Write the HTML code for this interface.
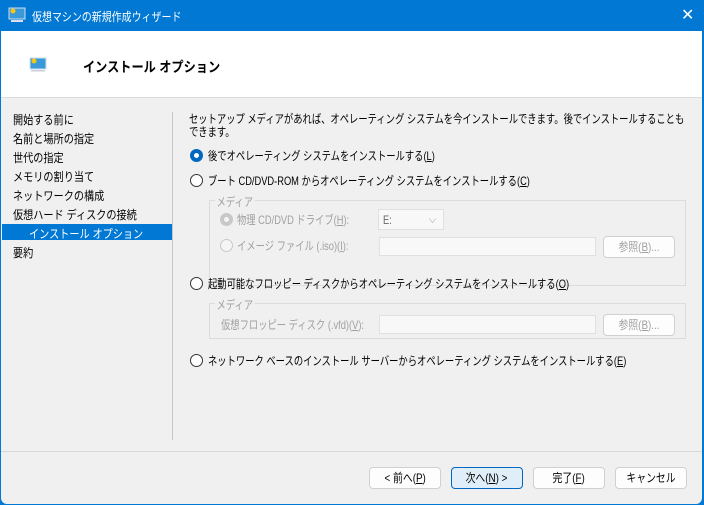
<!DOCTYPE html>
<html><head><meta charset="utf-8"><style>
*{margin:0;padding:0;box-sizing:border-box}
body{width:704px;height:505px;background:#0078d4;font-family:"Liberation Sans","Noto Sans CJK JP",sans-serif;font-size:12px;color:#000;position:relative;overflow:hidden}
.win{position:absolute;left:1px;top:31px;width:701px;height:473px;background:#f0f0f0;border-bottom-left-radius:6px;border-bottom-right-radius:6px;overflow:hidden}
.t{position:absolute;white-space:nowrap;transform:scaleX(0.775);transform-origin:0 0}
.t.title{left:32px;top:8px;color:#fff;font-size:12px;transform:scaleX(0.83)}
.hdr{position:absolute;left:0;top:0;width:701px;height:67px;background:#fff;border-bottom:1px solid #dcdcdc}
.t.nav{left:12px;font-size:12px;transform:scaleX(0.845)}
.sel{position:absolute;left:1px;top:193px;width:170px;height:16px;background:#0078d4}
.rad{position:absolute;width:13px;height:13px;border-radius:50%;border:1px solid #333;background:#fff}
.rad.on{border:4px solid #0067c0}
.rad.dis{border-color:#c8c8c8;background:#f5f5f5}
.grp{position:absolute;border:1px solid #dcdcdc}
.dis{color:#a0a0a0}
.box{position:absolute;background:#f8f8f8;border:1px solid #e0e0e0}
.btn{position:absolute;height:22px;border:1px solid #d0d0d0;border-radius:4px;background:#fdfdfd;text-align:center;line-height:20px;font-size:12px;white-space:nowrap}
.btn span{display:inline-block;transform:scaleX(0.82)}
u{text-decoration:underline}
</style></head><body>
<svg style="position:absolute;left:8px;top:7px" width="18" height="16"><rect x="1" y="1" width="16" height="11" fill="#3a9ad9" stroke="#cde" /><circle cx="5" cy="4" r="2.5" fill="#f5c518"/><rect x="3" y="13" width="12" height="2" fill="#dde"/></svg>
<div class="t title">仮想マシンの新規作成ウィザード</div>
<div class="t" style="left:681px;top:5px;color:#fff;font-size:16px;transform:none">✕</div>
<div class="win">
<div class="hdr">
<svg style="position:absolute;left:28px;top:26px" width="18" height="16"><rect x="1" y="1" width="16" height="11" fill="#3a9ad9" stroke="#cde"/><circle cx="5" cy="4" r="2.5" fill="#f5c518"/><rect x="2" y="13" width="14" height="1.5" fill="#ccd"/></svg>
<div class="t" style="left:82px;top:26px;font-size:14px;font-weight:bold;transform:scaleX(0.87)">インストール オプション</div>
</div>
<div class="sel"></div>
<div class="t nav" style="top:80px">開始する前に</div>
<div class="t nav" style="top:99px">名前と場所の指定</div>
<div class="t nav" style="top:118px">世代の指定</div>
<div class="t nav" style="top:137px">メモリの割り当て</div>
<div class="t nav" style="top:156px">ネットワークの構成</div>
<div class="t nav" style="top:175px">仮想ハード ディスクの接続</div>
<div class="t nav" style="top:194px;left:28px;color:#fff">インストール オプション</div>
<div class="t nav" style="top:213px">要約</div>
<div style="position:absolute;left:171px;top:81px;width:1px;height:328px;background:#c8c8c8"></div>
<div class="t" style="left:188px;top:82px;line-height:13px">セットアップ メディアがあれば、オペレーティング システムを今インストールできます。後でインストールすることも<br>できます。</div>
<div class="rad on" style="left:189px;top:118px"></div><div class="t" style="left:207px;top:116px">後でオペレーティング システムをインストールする(<u>L</u>)</div>
<div class="rad" style="left:189px;top:143px"></div><div class="t" style="left:207px;top:141px">ブート CD/DVD-ROM からオペレーティング システムをインストールする(<u>C</u>)</div>
<div class="grp" style="left:208px;top:169px;width:477px;height:86px"></div>
<div class="t dis" style="left:214px;top:162px;background:#f0f0f0;padding:0 2px">メディア</div>
<div class="rad dis" style="left:219px;top:182px;border:4px solid #c8c8c8"></div><div class="t dis" style="left:236px;top:180px">物理 CD/DVD ドライブ(<u>H</u>):</div>
<div class="box" style="left:377px;top:178px;width:66px;height:21px"><span class="t" style="left:4px;top:3px;color:#666">E:</span><span class="t dis" style="left:50px;top:2px">⌵</span></div>
<div class="rad dis" style="left:219px;top:208px"></div><div class="t dis" style="left:236px;top:206px">イメージ ファイル (.iso)(<u>I</u>):</div>
<div class="box" style="left:378px;top:206px;width:217px;height:19px"></div>
<div class="btn dis" style="left:602px;top:205px;width:72px"><span>参照(<u>B</u>)...</span></div>
<div class="rad" style="left:189px;top:246px"></div><div class="t" style="left:207px;top:244px">起動可能なフロッピー ディスクからオペレーティング システムをインストールする(<u>O</u>)</div>
<div class="grp" style="left:208px;top:272px;width:477px;height:36px"></div>
<div class="t dis" style="left:214px;top:265px;background:#f0f0f0;padding:0 2px">メディア</div>
<div class="t dis" style="left:220px;top:285px">仮想フロッピー ディスク (.vfd)(<u>V</u>):</div>
<div class="box" style="left:378px;top:284px;width:217px;height:19px"></div>
<div class="btn dis" style="left:602px;top:283px;width:72px"><span>参照(<u>B</u>)...</span></div>
<div class="rad" style="left:189px;top:323px"></div><div class="t" style="left:207px;top:321px">ネットワーク ベースのインストール サーバーからオペレーティング システムをインストールする(<u>E</u>)</div>
<div style="position:absolute;left:0;top:420px;width:701px;height:1px;background:#d8d8d8"></div>
<div class="btn" style="left:368px;top:436px;width:72px"><span>&lt; 前へ(<u>P</u>)</span></div>
<div class="btn" style="left:450px;top:436px;width:72px;background:#e0eef9;border-color:#0067c0"><span>次へ(<u>N</u>) &gt;</span></div>
<div class="btn" style="left:532px;top:436px;width:72px"><span>完了(<u>F</u>)</span></div>
<div class="btn" style="left:614px;top:436px;width:72px"><span>キャンセル</span></div>
</div>
</body></html>
